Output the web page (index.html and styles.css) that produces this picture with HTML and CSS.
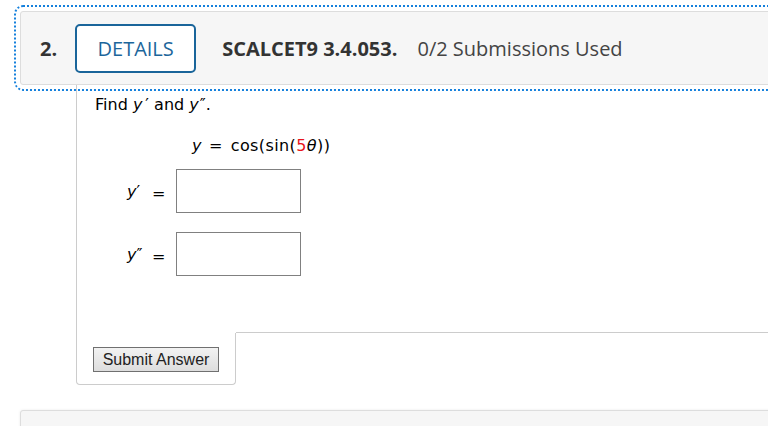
FILE: index.html
```html
<!DOCTYPE html>
<html>
<head>
<meta charset="utf-8">
<link rel="stylesheet" href="styles.css">
</head>
<body>
<div class="question">
  <div class="qhead">
    <span class="qnum">2.</span>
    <button class="details">DETAILS</button>
    <span class="qref">SCALCET9 3.4.053.</span>
    <span class="subs">0/2 Submissions Used</span>
  </div>
  <div class="qbody">
    <div class="content">
      <div class="prompt">Find <i class="mv">y</i><span class="pr">&#8242;</span> and <i class="mv">y</i><span class="pr2">&#8243;</span>.</div>
      <div class="equation"><i class="mv">y</i><span class="op">=</span>cos(sin(<span class="red">5</span><i class="mv">θ</i>))</div>
      <div class="ans-row">
        <span class="var"><i class="mv">y</i>&#8242;</span>
        <span class="eq">=</span>
        <input class="ans" type="text">
      </div>
      <div class="ans-row">
        <span class="var"><i class="mv">y</i>&#8243;</span>
        <span class="eq">=</span>
        <input class="ans" type="text">
      </div>
    </div>
    <div class="submit-cell">
      <button class="submit">Submit Answer</button>
    </div>
    <div class="filler"></div>
  </div>
  <div class="next-card"></div>
</div>
</body>
</html>
```
FILE: styles.css
```css
html, body {
  margin: 0;
  padding: 0;
  overflow: hidden;
  background: #ffffff;
}
body {
  width: 768px;
  height: 426px;
}
.question {
  padding-top: 11px;
  height: 415px;
  overflow: hidden;
}
.qhead {
  margin-left: 20px;
  width: 760px;
  height: 74px;
  box-sizing: border-box;
  border: 1px solid #dddddd;
  border-radius: 3px;
  background: #f6f6f6;
  outline: 2px dotted #1580dc;
  outline-offset: 4px;
  display: flex;
  align-items: center;
  padding-left: 19px;
  font-family: "Open Sans", sans-serif;
  font-size: 20px;
  color: #333333;
}
.qnum {
  font-weight: 700;
}
.details {
  margin-left: 18px;
  width: 121px;
  height: 49px;
  box-sizing: border-box;
  border: 2px solid #1a659a;
  border-radius: 5px;
  background: #ffffff;
  color: #1c669b;
  font-family: "Open Sans", sans-serif;
  font-size: 20px;
  font-weight: 500;
  padding: 0;
}
.qref {
  margin-left: 26px;
  font-weight: 700;
}
.subs {
  margin-left: 20px;
  color: #444444;
}
.qbody {
  margin-left: 76px;
  display: grid;
  grid-template-columns: 160px 1fr;
  font-family: "DejaVu Sans", Verdana, sans-serif;
  font-size: 16px;
  line-height: 19px;
  color: #000000;
}
.content {
  grid-column: 1 / -1;
  border-left: 1px solid #cccccc;
  padding: 10px 0 57px 18px;
}
.mv {
  font-style: italic;
}
.pr {
  margin-left: 3px;
}
.pr2 {
  margin-left: 1px;
}
.equation {
  margin-top: 22px;
  margin-left: 97px;
  letter-spacing: 0.4px;
}
.op {
  margin: 0 8px 0 7px;
}
.red {
  color: #e8141b;
}
.ans-row {
  display: flex;
  align-items: center;
  margin-top: 14px;
}
.ans-row + .ans-row {
  margin-top: 19px;
}
.var {
  margin-left: 32px;
  width: 25px;
}
.eq {
  width: 14px;
  position: relative;
  top: 2px;
}
.ans {
  margin: 0 0 0 10px;
  width: 125px;
  height: 44px;
  box-sizing: border-box;
  border: 1px solid #808080;
  padding: 0;
  background: #ffffff;
}
.submit-cell {
  box-sizing: border-box;
  border-left: 1px solid #cccccc;
  border-right: 1px solid #cccccc;
  border-bottom: 1px solid #cccccc;
  border-radius: 0 0 4px 4px;
  padding: 14px 0 12px 16px;
}
.submit {
  display: block;
  width: 126px;
  height: 25px;
  box-sizing: border-box;
  border: 1px solid #707070;
  border-radius: 0;
  background: linear-gradient(#f2f2f2, #dddddd);
  font-family: "Liberation Sans", Arial, sans-serif;
  font-size: 16px;
  color: #222222;
  padding: 0;
}
.filler {
  border-top: 1px solid #cccccc;
  margin-top: -1px;
}
.next-card {
  margin: 25px 0 0 20px;
  width: 760px;
  height: 30px;
  border: 1px solid #dddddd;
  border-radius: 3px;
  background: #f6f6f6;
  box-shadow: 0 0 3px rgba(0, 0, 0, 0.08);
}
```
